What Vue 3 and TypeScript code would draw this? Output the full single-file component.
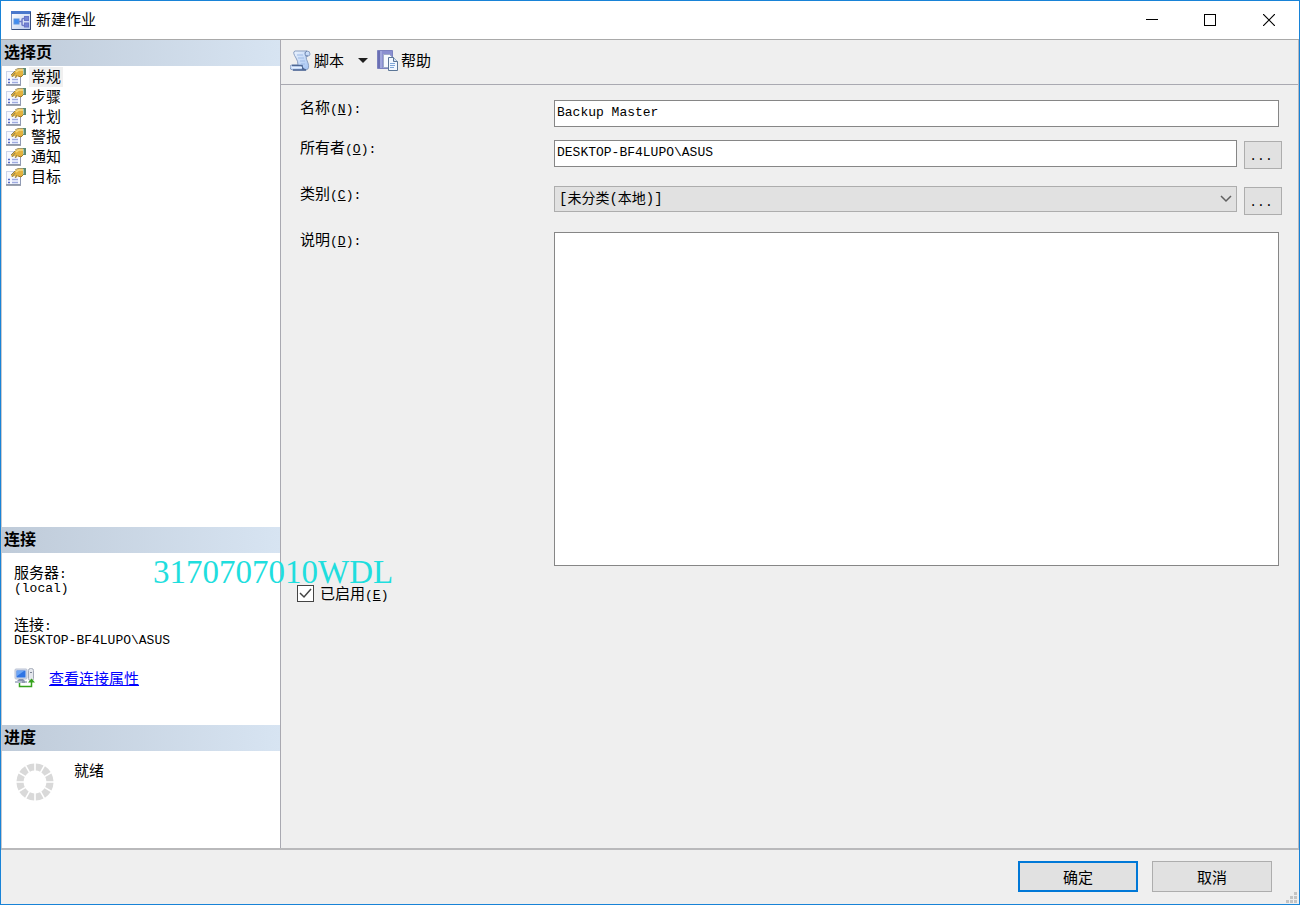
<script setup lang="ts">
import { ref } from 'vue'

const pages = ['常规', '步骤', '计划', '警报', '通知', '目标']
const current = ref('常规')
const jobName = ref('Backup Master')
const owner = ref('DESKTOP-BF4LUPO\\ASUS')
const category = ref('[未分类(本地)]')
const description = ref('')
const enabled = ref(true)
const segments = Array.from({ length: 12 }, (_, i) => i * 30 + 15)
</script>

<template>
  <div class="window">
    <header class="titlebar">
      <svg class="app-icon" width="20" height="19" viewBox="0 0 20 19" aria-hidden="true">
        <defs>
          <linearGradient id="appbg" x1="0" y1="0" x2="1" y2="1">
            <stop offset="0" stop-color="#ffffff" />
            <stop offset="1" stop-color="#b9cbee" />
          </linearGradient>
        </defs>
        <rect x="0.5" y="0.5" width="19" height="18" fill="url(#appbg)" stroke="#7d93c0" />
        <rect x="0" y="0" width="20" height="3" fill="#4a78cc" />
        <path d="M19.5 1v17.5H1" fill="none" stroke="#344d7d" />
        <rect x="3" y="8" width="5" height="5" fill="#3f8cf0" stroke="#5b93e0" />
        <path d="M8 10.5h3M14 7.500h-2q-1 0-1 1v5q0 1 1 1h2" fill="none" stroke="#6f7cc6" stroke-width="1.500" />
        <rect x="13.500" y="5.500" width="4" height="4" fill="#7483d6" stroke="#6876c8" />
        <rect x="13.500" y="12" width="4" height="4" fill="#7483d6" stroke="#6876c8" />
      </svg>
      <h1>新建作业</h1>
      <div class="window-buttons">
        <button type="button" aria-label="最小化">
          <svg width="12" height="12" viewBox="0 0 12 12"><path d="M0 5.500h12" stroke="#000" /></svg>
        </button>
        <button type="button" aria-label="最大化">
          <svg width="12" height="12" viewBox="0 0 12 12"><rect x="0.5" y="0.5" width="11" height="11" fill="none" stroke="#000" /></svg>
        </button>
        <button type="button" aria-label="关闭">
          <svg width="12" height="12" viewBox="0 0 12 12"><path d="M0 0l12 12M12 0L0 12" stroke="#000" stroke-width="1.200" /></svg>
        </button>
      </div>
    </header>

    <div class="body">
      <aside class="sidebar">
        <section class="pages">
          <h2>选择页</h2>
          <ul>
            <li v-for="page in pages" :key="page">
              <button type="button" :class="{ active: page === current }" @click="current = page">
                <svg width="20" height="18" viewBox="0 0 20 18" aria-hidden="true">
                  <rect x="0.5" y="3.500" width="14" height="13" fill="#f6f8ff" stroke="#ccd5ea" />
                  <path d="M0 17h15" stroke="#7c8496" stroke-width="1.500" />
                  <path d="M14.500 8v9" stroke="#8f9ab4" />
                  <path d="M2 11.500h2M2 14.500h2" stroke="#5a6cc4" stroke-width="1.500" />
                  <path d="M6 11.500h6M6 14.500h6" stroke="#9fabe0" stroke-width="1.500" />
                  <path d="M5 7l4-4 3-2h5v6l-2 2-3-1-2 2-1-2-3 1z" fill="#e3b23f" />
                  <path d="M5 7l4-4M6 9l3-4M9 10l2-3" stroke="#8c8159" fill="none" />
                  <path d="M10 4l3-2h4" stroke="#f8dc84" stroke-width="1.500" fill="none" />
                  <path d="M12 8l3 1 2-2" stroke="#a47a25" fill="none" />
                  <path d="M9 2l3-1.500h5" stroke="#8d7c48" stroke-width="0.8" fill="none" />
                  <rect x="17" y="0" width="3" height="7" fill="#5d8a72" />
                  <path d="M17.500 1v5" stroke="#a8c7b3" />
                </svg>
                <span>{{ page }}</span>
              </button>
            </li>
          </ul>
        </section>

        <section class="connection">
          <h2>连接</h2>
          <div class="connection-body">
            <dl>
              <dt>服务器<span class="latin">:</span></dt>
              <dd class="latin">(local)</dd>
              <dt>连接<span class="latin">:</span></dt>
              <dd class="latin">{{ owner }}</dd>
            </dl>
            <div class="link-row">
              <svg width="22" height="20" viewBox="0 0 22 20" aria-hidden="true">
                <rect x="1" y="1" width="12" height="10" rx="1" fill="#d4dcec" stroke="#b9c1d3" />
                <rect x="2.500" y="2.500" width="9" height="7" fill="#2f74e4" />
                <path d="M3 3h7L3 8z" fill="#6ba5f5" />
                <path d="M5 11h4l2 2H3z" fill="#8793ae" />
                <path d="M1 14h12" stroke="#b4bccf" stroke-width="2" />
                <path d="M8 14h3" stroke="#6e7890" />
                <rect x="14.500" y="0.500" width="5" height="12" rx="2" fill="#e4e7ed" stroke="#a4aab7" />
                <path d="M16 4.500h2" stroke="#7c8495" />
                <path d="M5.500 15v3.500h12V14" fill="none" stroke="#36a31c" stroke-width="1.500" />
                <path d="M14 14.500l3.500-4 3.500 4z" fill="#36a31c" />
              </svg>
              <a href="#connection">查看连接属性</a>
            </div>
          </div>
        </section>

        <section class="progress">
          <h2>进度</h2>
          <div class="progress-body">
            <svg width="38" height="38" viewBox="0 0 38 38" aria-hidden="true">
              <path
                v-for="angle in segments"
                :key="angle"
                d="M15 0.900A18.500 18.500 0 0 1 23 0.900L21.200 7.800A11.500 11.500 0 0 0 16.800 7.800Z"
                :transform="`rotate(${angle} 19 19)`"
                fill="#d9d9d9"
              />
            </svg>
            <span>就绪</span>
          </div>
        </section>
      </aside>

      <main class="content">
        <div class="toolbar">
          <button type="button" class="tool">
            <svg width="21" height="21" viewBox="0 0 21 21" aria-hidden="true">
              <defs>
                <linearGradient id="scroll" x1="0" y1="0" x2="1" y2="1">
                  <stop offset="0" stop-color="#f4f9ff" />
                  <stop offset="1" stop-color="#9fc0f2" />
                </linearGradient>
              </defs>
              <path d="M5 1h12q3 0 3 3 0 2-2 2h-2q0 3 2 7 2 6-2 7H3q-3 0-3-3 0-2 2-2h6Q8 11 6 8 2 2 5 1z" fill="url(#scroll)" stroke="#8a9fc2" />
              <path d="M18 6h-2q-1-1-1-3 0-1 2-2" fill="none" stroke="#6780ac" />
              <path d="M2 15.500h10q0 4 4 4.500H3" fill="none" stroke="#4e6794" stroke-width="1.500" />
              <path d="M7 5h6M8 8h6M10 11h5M11 14h4" stroke="#9db9e4" />
              <path d="M2 17.500h10" stroke="#e6f0ff" stroke-width="1.500" />
            </svg>
            <span>脚本</span>
          </button>
          <button type="button" class="tool arrow" aria-label="脚本选项">
            <svg width="10" height="5" viewBox="0 0 10 5"><path d="M0 0h10L5 5z" fill="#1e1e1e" /></svg>
          </button>
          <button type="button" class="tool">
            <svg width="21" height="21" viewBox="0 0 21 21" aria-hidden="true">
              <path d="M0.500 0.500h15v18h-15z" fill="#8a8fd0" stroke="#7c82c0" />
              <path d="M2 1v17" stroke="#6a6fb4" stroke-width="2" />
              <path d="M4 1v17" stroke="#b7bde9" />
              <path d="M6.500 4.500h6l3 3v10h-9z" fill="#f7faff" stroke="#a0acc8" />
              <path d="M11.500 7.500h5l4 4v9h-9z" fill="#f2f7ff" stroke="#5b7596" />
              <path d="M16.500 7.500v4h4" fill="#d4e2f5" stroke="#5b7596" />
              <path d="M13 13.500h5M13 15.500h5M13 17.500h4" stroke="#7fa6d8" />
            </svg>
            <span>帮助</span>
          </button>
        </div>

        <form id="job" class="form" @submit.prevent>
          <div class="row">
            <label for="job-name">名称<span class="latin">(<u>N</u>):</span></label>
            <input id="job-name" v-model="jobName" class="wide" type="text" />
          </div>
          <div class="row">
            <label for="job-owner">所有者<span class="latin">(<u>O</u>):</span></label>
            <input id="job-owner" v-model="owner" type="text" />
            <button type="button" class="browse" aria-label="浏览所有者">...</button>
          </div>
          <div class="row">
            <label for="job-category">类别<span class="latin">(<u>C</u>):</span></label>
            <div class="select-box">
              <select id="job-category" v-model="category">
                <option>[未分类(本地)]</option>
              </select>
              <svg width="12" height="8" viewBox="0 0 12 8" aria-hidden="true"><path d="M1 1l5 5 5-5" fill="none" stroke="#606060" stroke-width="1.500" /></svg>
            </div>
            <button type="button" class="browse" aria-label="浏览类别">...</button>
          </div>
          <div class="row grow">
            <label for="job-description">说明<span class="latin">(<u>D</u>):</span></label>
            <textarea id="job-description" v-model="description" class="wide"></textarea>
          </div>
          <label class="check">
            <input v-model="enabled" type="checkbox" />
            <span>已启用<span class="latin">(<u>E</u>)</span></span>
          </label>
        </form>
      </main>
    </div>

    <footer class="footer">
      <button type="submit" form="job" class="primary">确定</button>
      <button type="button">取消</button>
      <svg class="grip" width="11" height="11" viewBox="0 0 11 11" aria-hidden="true">
        <path d="M8 0h3v3H8zM4 4h3v3H4zM8 4h3v3H8zM0 8h3v3H0zM4 8h3v3H4zM8 8h3v3H8z" fill="#c4c4c4" />
      </svg>
    </footer>

    <div class="watermark">3170707010WDL</div>
  </div>
</template>

<style>
body {
  margin: 0;
}
</style>

<style scoped>
* {
  box-sizing: border-box;
}

.window {
  position: relative;
  display: flex;
  flex-direction: column;
  min-height: 100vh;
  border: 1px solid #1883d7;
  background: #efefef;
  color: #000;
  font: 15px/20px "Noto Sans CJK SC", sans-serif;
}

button,
input,
textarea {
  font: inherit;
  color: inherit;
}

button {
  padding: 0;
  border: 0;
  background: none;
}

svg {
  display: block;
  flex: none;
}

.latin {
  font-family: "Liberation Mono", monospace;
  font-size: 13px;
  line-height: 10px;
}

.titlebar {
  display: flex;
  align-items: center;
  height: 39px;
  padding-left: 10px;
  gap: 5px;
  border-bottom: 1px solid #a9a9a9;
  background: #fff;
}

.titlebar h1 {
  margin: 0;
  padding-bottom: 2px;
  font-size: 15px;
  font-weight: 400;
  line-height: 18px;
}

.window-buttons {
  display: flex;
  margin-left: auto;
}

.window-buttons button {
  display: flex;
  align-items: center;
  justify-content: center;
  width: 58px;
  height: 38px;
}

.window-buttons button:last-child {
  width: 60px;
}

.body {
  display: flex;
  flex: 1;
  border-bottom: 2px solid #b9b9bb;
}

.sidebar {
  display: flex;
  flex-direction: column;
  flex: none;
  width: 280px;
  border-left: 1px solid #c8c8cc;
  border-right: 1px solid #a9a9b1;
  background: #fff;
}

.sidebar h2 {
  height: 26px;
  margin: 0;
  padding-left: 2px;
  background: linear-gradient(90deg, #bfcbd9, #d7e4f2);
  font-size: 16px;
  font-weight: 700;
  line-height: 22px;
}

.pages {
  flex: 1;
}

.pages ul {
  margin: 0;
  padding: 1px 0 0 4px;
  list-style: none;
}

.pages li button {
  display: flex;
  align-items: center;
  gap: 3px;
  height: 20px;
}

.pages li span {
  padding: 0 2px 2px;
  line-height: 18px;
}

.pages .active span {
  background: #f0f0f0;
}

.connection-body {
  height: 172px;
  padding: 11px 12px 0;
}

dl {
  margin: 0;
}

dt {
  height: 18px;
  line-height: 16px;
}

dd {
  height: 34px;
  margin: 0;
}

dd.latin {
  line-height: 14px;
}

.link-row {
  display: flex;
  align-items: center;
  gap: 13px;
}

.link-row a {
  color: #00f;
}

.progress-body {
  display: flex;
  gap: 20px;
  height: 97px;
  padding: 12px 14px;
}

.progress-body span {
  line-height: 14px;
}

.content {
  display: flex;
  flex: 1;
  flex-direction: column;
  min-width: 0;
  border-right: 1px solid #b9b9bf;
}

.toolbar {
  display: flex;
  align-items: center;
  height: 45px;
  padding: 0 0 4px 9px;
  border-bottom: 1px solid #a9a9b1;
}

.tool {
  display: flex;
  align-items: center;
  gap: 3px;
}

.arrow {
  padding: 0 9px 0 14px;
}

.form {
  display: flex;
  flex: 1;
  flex-direction: column;
  padding: 15px 16px 245px 19px;
}

.row {
  display: flex;
  align-items: flex-start;
  margin-bottom: 17px;
}

.row:first-child {
  margin-bottom: 13px;
}

.row > label {
  flex: none;
  width: 254px;
  line-height: 14px;
}

.row input,
.row textarea {
  flex: 1;
  min-width: 0;
  margin: 0;
  border: 1px solid #868686;
  border-radius: 0;
  outline: 0;
  background: #fff;
  font: 13px/20px "Liberation Mono", monospace;
}

.row input {
  height: 27px;
  padding: 0 2px 3px;
}

.row .wide {
  margin-right: 3px;
}

.row textarea {
  align-self: stretch;
  min-height: 120px;
  padding: 2px;
  resize: none;
}

.grow {
  flex: 1;
}

.select-box {
  display: grid;
  flex: 1;
  align-items: center;
}

.select-box > * {
  grid-area: 1 / 1;
}

.select-box select {
  appearance: none;
  width: 100%;
  height: 26px;
  padding: 0 24px 0 4px;
  border: 1px solid #adadad;
  border-radius: 0;
  background: #e1e1e1;
  color: #000;
  font: 14px/20px "Liberation Mono", "Noto Sans CJK SC", monospace;
}

.select-box svg {
  justify-self: end;
  margin-right: 5px;
  pointer-events: none;
}

.browse {
  flex: none;
  width: 38px;
  height: 28px;
  margin: 1px 0 0 7px;
  padding: 4px 4px 0 0;
  border: 1px solid #adadad;
  background: #e1e1e1;
  font: 13px/20px "Liberation Mono", monospace;
}

.check {
  display: flex;
  align-items: center;
  align-self: flex-start;
  gap: 6px;
  margin-left: -3px;
}

.check input {
  appearance: none;
  width: 17px;
  height: 17px;
  margin: 0;
  border: 1px solid #444;
  background: #fff;
}

.check input:checked {
  background: url("data:image/svg+xml,%3Csvg xmlns='http://www.w3.org/2000/svg' viewBox='0 0 15 15'%3E%3Cpath d='M2 7l4 4 7-8' fill='none' stroke='%23444' stroke-width='1.500'/%3E%3C/svg%3E") #fff;
}

.footer {
  position: relative;
  display: flex;
  justify-content: flex-end;
  gap: 14px;
  height: 54px;
  padding: 11px 27px 12px;
}

.footer button {
  width: 120px;
  height: 31px;
  border: 1px solid #adadad;
  background: #e1e1e1;
}

.footer .primary {
  border: 2px solid #0078d7;
}

.grip {
  position: absolute;
  right: 2px;
  bottom: 1px;
}

.watermark {
  position: absolute;
  top: 551px;
  left: 152px;
  color: #1fdede;
  font: 33px/40px "Liberation Serif", serif;
  pointer-events: none;
}
</style>
